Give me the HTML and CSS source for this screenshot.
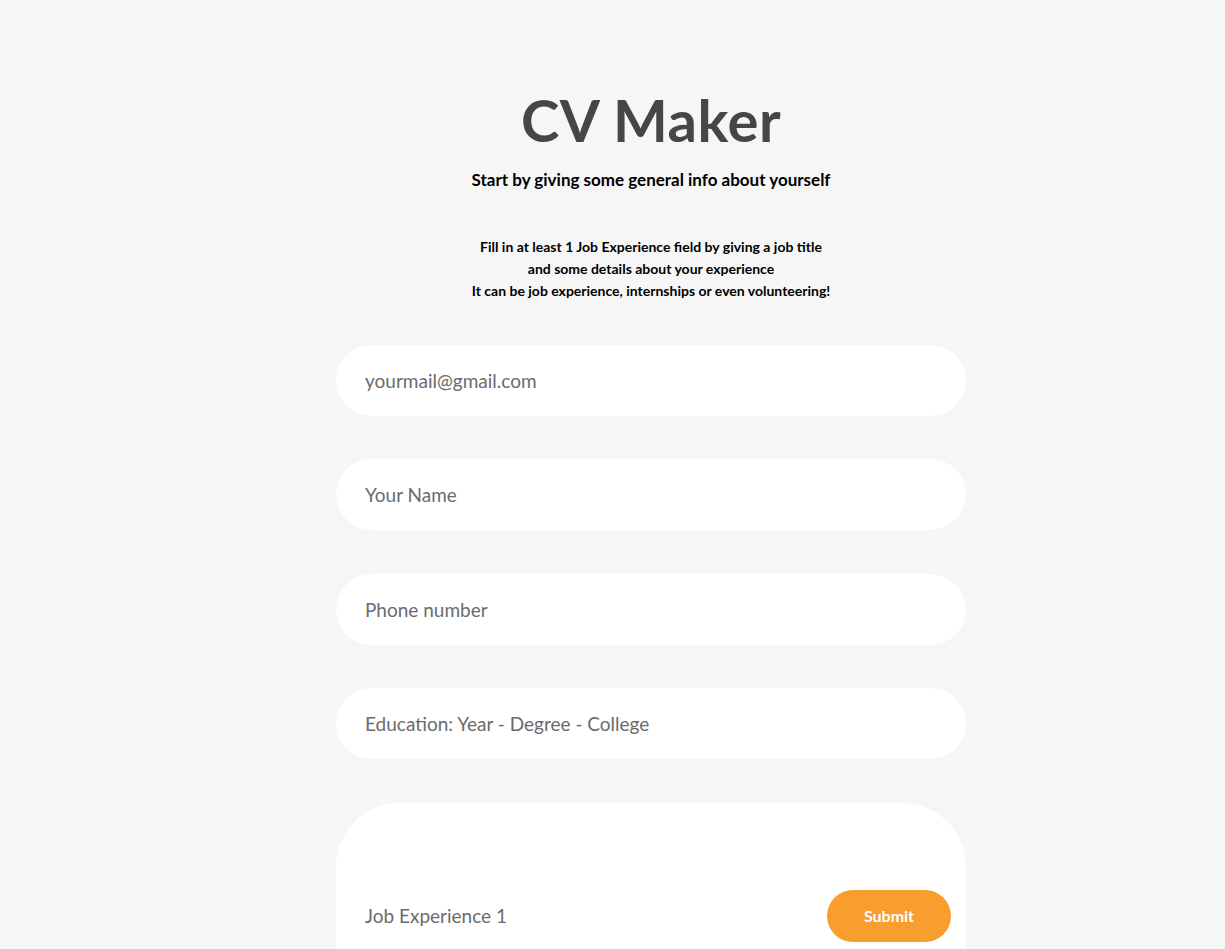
FILE: index.html
```html
<!DOCTYPE html>
<html lang="en">
<head>
<meta charset="utf-8">
<title>CV Maker</title>
<link rel="stylesheet" href="styles.css">
</head>
<body>
<main class="page">
  <header class="intro">
    <h1 class="title">CV Maker</h1>
    <p class="subtitle">Start by giving some general info about yourself</p>
    <p class="hint">Fill in at least 1 Job Experience field by giving a job title<br>and some details about your experience<br>It can be job experience, internships or even volunteering!</p>
  </header>
  <form class="form">
    <input class="field" type="email" placeholder="yourmail@gmail.com">
    <input class="field" type="text" placeholder="Your Name">
    <input class="field" type="text" placeholder="Phone number">
    <input class="field" type="text" placeholder="Education: Year - Degree - College">
    <div class="job">
      <input class="job-title" type="text" placeholder="Job Experience 1">
      <button class="submit" type="button">Submit</button>
    </div>
  </form>
</main>
</body>
</html>
```

FILE: styles.css
```css
* { box-sizing: border-box; }
html, body { margin: 0; padding: 0; }
body {
  background: #f6f6f6;
  font-family: "Lato", "DejaVu Sans", sans-serif;
  color: #000;
  height: 949px;
  overflow: hidden;
}
.page {
  width: 630px;
  margin-left: 336px;
  padding-top: 85px;
}
.intro { text-align: center; }
.title {
  margin: 0;
  font-size: 58px;
  font-weight: 700;
  color: #464646;
  line-height: 70px;
  letter-spacing: 0.5px;
}
.subtitle {
  margin: 13px 0 0;
  font-size: 17px;
  font-weight: 700;
  line-height: 24px;
}
.hint {
  margin: 44px 0 0;
  font-size: 14px;
  font-weight: 700;
  line-height: 22px;
}
.form {
  display: flex;
  flex-direction: column;
  gap: 43.4px;
  margin-top: 43px;
}
.field {
  display: block;
  width: 630px;
  height: 71px;
  border: none;
  border-radius: 36px;
  background: #fff;
  padding: 0 29px;
  font-family: "Lato", "DejaVu Sans", sans-serif;
  font-size: 19px;
  color: #333;
  outline: none;
}
.field::placeholder, .job-title::placeholder { color: #6b6b6b; }
.job {
  background: #fff;
  border-radius: 64px;
  height: 200px;
  padding: 87px 15px 0 29px;
  display: flex;
  align-items: flex-start;
  justify-content: space-between;
}
.job-title {
  border: none;
  background: transparent;
  font-family: "Lato", "DejaVu Sans", sans-serif;
  font-size: 19px;
  height: 52px;
  padding: 0;
  width: 300px;
  outline: none;
}
.submit {
  width: 124px;
  height: 52px;
  border: none;
  border-radius: 26px;
  background: #f99d2e;
  color: #fff;
  font-family: "Lato", "DejaVu Sans", sans-serif;
  font-size: 16px;
  font-weight: 700;
  cursor: pointer;
}
```
